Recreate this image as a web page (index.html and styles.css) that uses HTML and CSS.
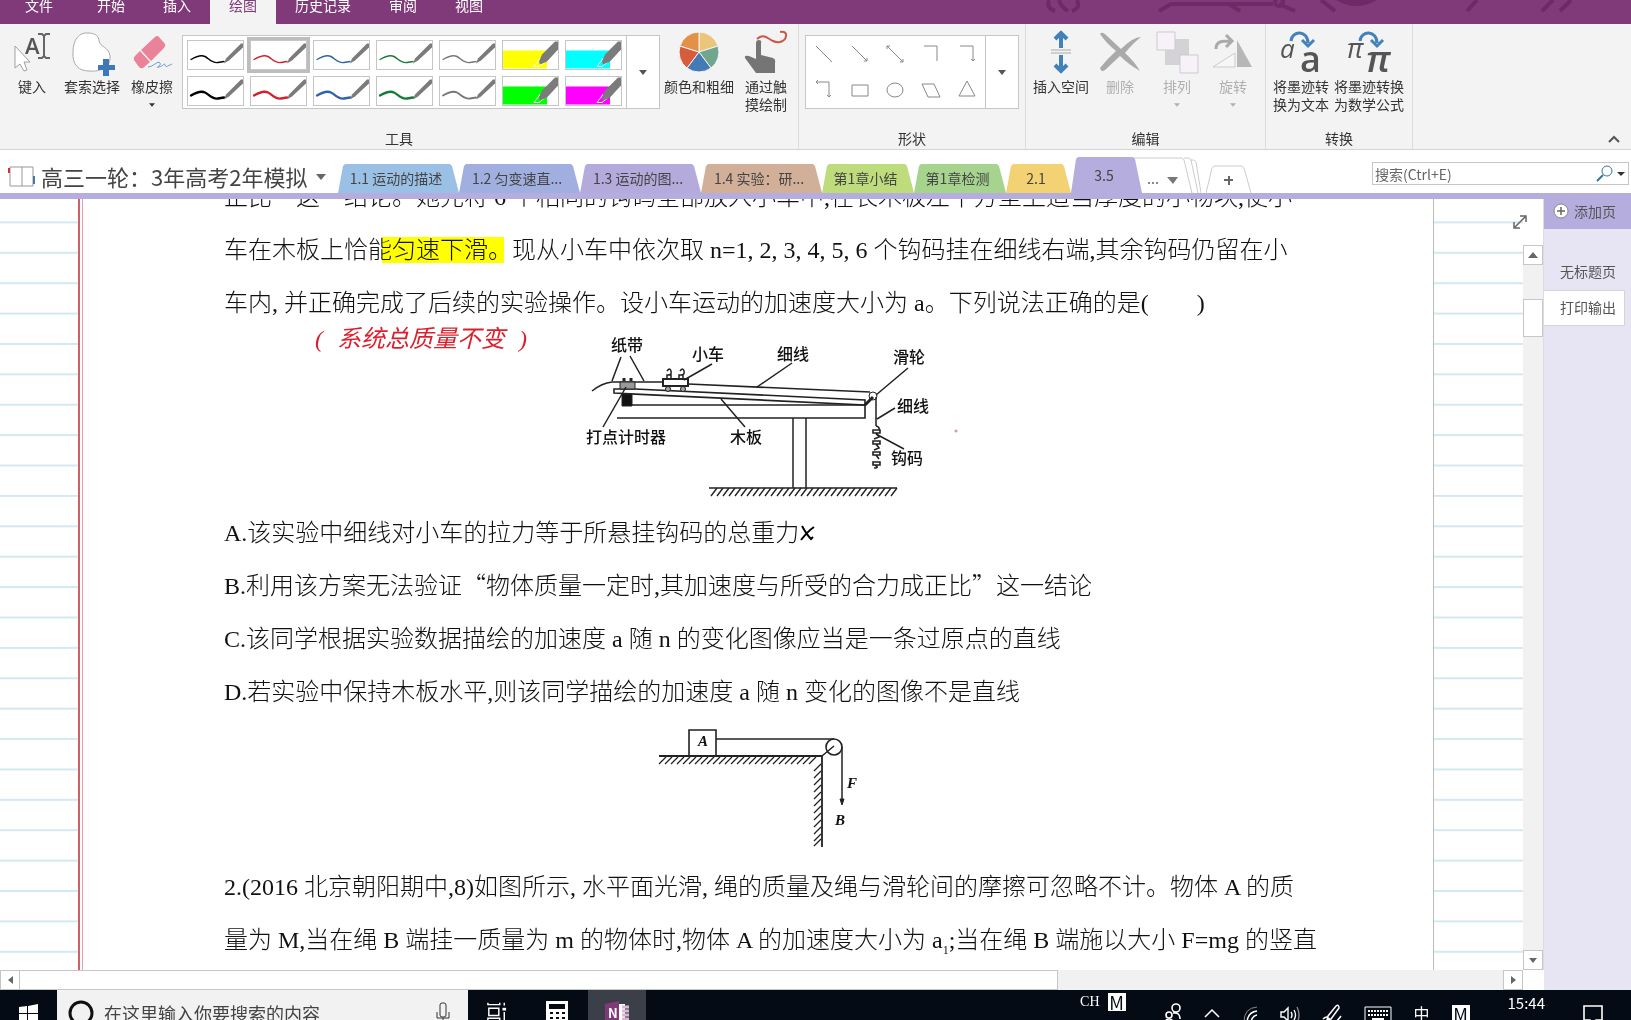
FILE: index.html
```html
<!DOCTYPE html>
<html lang="zh-CN">
  <head>
    <meta charset="UTF-8" />
    <meta name="viewport" content="width=device-width, initial-scale=1.0" />
    <title>高三一轮：3年高考2年模拟</title>
    <link rel="stylesheet" href="styles.css">
  </head>
  <body>
    <svg class="defs" aria-hidden="true">
      <symbol id="pen" viewBox="0 0 55 27">
        <path d="M3 18C8 15 13 13 17 15S24 22 30 21L36 20" fill="none" stroke="currentColor" stroke-linecap="round" />
        <path d="M36 22L38 17L53 2L55 2V6L41 19Z" fill="#7b7b7b" stroke="none" />
      </symbol>
      <symbol id="marker" viewBox="0 0 55 27">
        <path d="M0 9H44V27H0Z" fill="currentColor" />
        <path d="M31 25L37 17L41 21L36 25Z" fill="currentColor" stroke="#fff" />
        <path d="M36 20L39 13L52 0H55V8L44 20L37 23Z" fill="#7b7b7b" />
      </symbol>
      <symbol id="down" viewBox="0 0 10 6"><path d="M0 0H10L5 6Z" fill="currentColor" /></symbol>
    </svg>

    <header class="menu-bar">
      <nav>
        <a class="file" href="#">文件</a>
        <a href="#">开始</a>
        <a href="#">插入</a>
        <a class="active" href="#">绘图</a>
        <a href="#">历史记录</a>
        <a href="#">审阅</a>
        <a href="#">视图</a>
      </nav>
      <svg class="pattern" width="590" height="24" viewBox="0 0 590 24" fill="none" stroke="#6d2a66" stroke-width="4" aria-hidden="true">
        <path d="M8 0Q5 8 14 11M36 0Q40 8 31 11M18 0Q20 7 27 11M118 11L130 4H232M188 4L199 11M238 4L254 11M280 0L294 11M426 11L436 0M501 11L512 0M519 11L530 0" />
        <circle cx="238" cy="2" r="4" />
        <path d="M295 0Q315 12 336 0Z" fill="#6d2a66" stroke="none" />
      </svg>
    </header>

    <section class="ribbon">
      <div class="group tools">
        <div class="group-body">
          <button class="tool w52">
            <svg width="44" height="48" viewBox="0 0 44 48"><path d="M5 17V39L10 35L14 42L17 41L14 33H20Z" fill="#fff" stroke="#a0a0a0" /><text x="15" y="25" font-size="22" font-weight="600" fill="#555">A</text><path d="M28 5H32L34 7L36 5H40M34 7V27M28 29H32L34 27L36 29H40" fill="none" stroke="#666" stroke-width="2" /></svg>
            <span>键入</span>
          </button>
          <button class="tool w60">
            <svg width="46" height="48" viewBox="0 0 46 48"><path d="M19 4C10 3 4 11 4 23C3 36 10 42 20 42C32 43 42 38 41 27C40 18 31 18 30 12C30 7 26 4 19 4Z" fill="#fff" stroke="#aaa" /><path d="M34 30H40V36H46V41H40V47H34V41H29V36H34Z" fill="#3e78b8" /></svg>
            <span>套索选择</span>
          </button>
          <button class="tool w52">
            <svg width="44" height="48" viewBox="0 0 44 48"><path d="M25 8Q27 6 29 8L35 15Q36 17 34 19L21 32L11 21Z" fill="#ea8299" /><path d="M10 22L20 33L13 39Q11 40 9 38L4 31Q3 29 5 27Z" fill="#ea8299" /><path d="M18 38C23 38 28 31 30 34S24 39 29 38S34 33 35 36S37 37 42 35" fill="none" stroke="#6c9bc8" /></svg>
            <span>橡皮擦</span>
            <svg class="caret" width="6" height="4"><use href="#down" /></svg>
          </button>
          <div class="gallery">
            <div class="ink-grid">
              <button class="ink black" aria-label="黑色笔"><svg stroke-width="1.4"><use href="#pen" /></svg></button>
              <button class="ink red selected" aria-label="红色笔"><svg stroke-width="1.4"><use href="#pen" /></svg></button>
              <button class="ink blue" aria-label="蓝色笔"><svg stroke-width="1.4"><use href="#pen" /></svg></button>
              <button class="ink green" aria-label="绿色笔"><svg stroke-width="1.4"><use href="#pen" /></svg></button>
              <button class="ink gray" aria-label="灰色笔"><svg stroke-width="1.4"><use href="#pen" /></svg></button>
              <button class="ink yellow" aria-label="黄色荧光笔"><svg><use href="#marker" /></svg></button>
              <button class="ink cyan" aria-label="青色荧光笔"><svg><use href="#marker" /></svg></button>
              <button class="ink black" aria-label="黑色粗笔"><svg stroke-width="2.3"><use href="#pen" /></svg></button>
              <button class="ink red" aria-label="红色粗笔"><svg stroke-width="2.3"><use href="#pen" /></svg></button>
              <button class="ink blue" aria-label="蓝色粗笔"><svg stroke-width="2.3"><use href="#pen" /></svg></button>
              <button class="ink green" aria-label="绿色粗笔"><svg stroke-width="2.3"><use href="#pen" /></svg></button>
              <button class="ink gray" aria-label="灰色粗笔"><svg stroke-width="1.8"><use href="#pen" /></svg></button>
              <button class="ink lime" aria-label="绿色荧光笔"><svg><use href="#marker" /></svg></button>
              <button class="ink magenta" aria-label="洋红荧光笔"><svg><use href="#marker" /></svg></button>
            </div>
            <button class="more" aria-label="更多"><svg width="8" height="5"><use href="#down" /></svg></button>
          </div>
          <button class="tool w70">
            <svg width="44" height="48" viewBox="0 0 44 48" stroke="#f3f3f3"><path d="M22 23V3A20 20 0 0 1 41 17Z" fill="#eac57a" /><path d="M22 23L41 17A20 20 0 0 1 34 39Z" fill="#70a58e" /><path d="M22 23L34 39A20 20 0 0 1 10 39Z" fill="#447ab5" /><path d="M22 23L10 39A20 20 0 0 1 3 17Z" fill="#d85c3c" /><path d="M22 23L3 17A20 20 0 0 1 22 3Z" fill="#e49148" /></svg>
            <span>颜色和粗细</span>
          </button>
          <button class="tool w56">
            <svg width="44" height="48" viewBox="0 0 44 48"><path d="M12 14Q12 11 15 11T17 14V26L29 29Q32 30 31 34V44H12L1 29Q0 26 5 27L12 30Z" fill="#757575" /><path d="M13 10C19 4 23 9 29 12S43 12 42 5Q41 2 36 3" fill="none" stroke="#cf5745" stroke-width="2" /></svg>
            <span>通过触<br>摸绘制</span>
          </button>
        </div>
        <h2>工具</h2>
      </div>

      <div class="group shapes">
        <div class="group-body">
          <div class="gallery">
            <div class="shape-grid">
              <button aria-label="直线"><svg viewBox="0 0 20 20"><path d="M2 2L18 18" /></svg></button>
              <button aria-label="箭头"><svg viewBox="0 0 20 20"><path d="M2 2L17 17M17 14V17H14" /></svg></button>
              <button aria-label="双箭头"><svg viewBox="0 0 20 20"><path d="M2 2L18 18M18 15V18H15M2 5V2H5" /></svg></button>
              <button aria-label="折线"><svg viewBox="0 0 20 20"><path d="M3 2H16V17" /></svg></button>
              <button aria-label="折线箭头"><svg viewBox="0 0 20 20"><path d="M3 2H16V17M14 15L16 17L18 15" /></svg></button>
              <button aria-label="折线双箭头"><svg viewBox="0 0 20 20"><path d="M2 2H15V17M13 15L15 17L17 15M4 0L2 2L4 4" /></svg></button>
              <button aria-label="矩形"><svg viewBox="0 0 20 20"><path d="M2 5H18V16H2Z" /></svg></button>
              <button aria-label="椭圆"><svg viewBox="0 0 20 20"><ellipse cx="10" cy="10" rx="8" ry="7" /></svg></button>
              <button aria-label="平行四边形"><svg viewBox="0 0 20 20"><path d="M1 4H13L19 17H7Z" /></svg></button>
              <button aria-label="三角形"><svg viewBox="0 0 20 20"><path d="M10 1L18 16H2Z" /></svg></button>
            </div>
            <button class="more" aria-label="更多形状"><svg width="8" height="5"><use href="#down" /></svg></button>
          </div>
        </div>
        <h2>形状</h2>
      </div>

      <div class="group edit">
        <div class="group-body">
          <button class="tool w60">
            <svg width="44" height="48" viewBox="0 0 44 48"><path d="M22 4V19M22 26V42M16 10L22 4L28 10M16 36L22 42L28 36" fill="none" stroke="#4381bb" stroke-width="4" /><path d="M12 21H32M12 24H32" stroke="#aaa" /></svg>
            <span>插入空间</span>
          </button>
          <button class="tool w58" disabled>
            <svg width="44" height="48" viewBox="0 0 44 48" fill="#aaa"><path d="M2 5Q4 2 8 6L23 20Q35 8 43 8Q35 14 27 24Q36 32 42 42Q30 35 22 27L7 41Q3 44 2 39Q9 30 18 22Q9 15 2 5Z" /></svg>
            <span>删除</span>
          </button>
          <button class="tool w56" disabled>
            <svg width="44" height="48" viewBox="0 0 44 48" stroke="#cfc7d1"><path d="M10 10H34V36H10Z" fill="#d5d2d6" stroke="none" /><path d="M2 3H20V21H2ZM25 26H43V44H25Z" fill="#f6f2f7" /></svg>
            <span>排列</span>
            <svg class="caret" width="6" height="4"><use href="#down" /></svg>
          </button>
          <button class="tool w56" disabled>
            <svg width="44" height="48" viewBox="0 0 44 48"><path d="M26 11V38H41Z" fill="#b7b7b7" /><path d="M24 24V38H2Z" fill="#f8f6f8" stroke="#ccc" /><path d="M5 20C5 12 11 12 20 12M15 6L21 12L15 18" fill="none" stroke="#aaa" stroke-width="3" /></svg>
            <span>旋转</span>
            <svg class="caret" width="6" height="4"><use href="#down" /></svg>
          </button>
        </div>
        <h2>编辑</h2>
      </div>

      <div class="group convert">
        <div class="group-body">
          <button class="tool w62">
            <svg width="44" height="48" viewBox="0 0 44 48"><text x="1" y="29" font-size="26" font-style="italic">a</text><text x="21" y="43" font-size="36" font-weight="600">a</text><path d="M12 12C13 1 29 1 29 14M23 11L29 17L35 11" fill="none" stroke="#4381bb" stroke-width="3" /></svg>
            <span>将墨迹转<br>换为文本</span>
          </button>
          <button class="tool w74">
            <svg width="44" height="48" viewBox="0 0 44 48"><text x="0" y="29" font-size="27" font-style="italic">π</text><text x="19" y="43" font-size="37" font-style="italic" font-weight="600">π</text><path d="M13 12C14 1 30 1 30 14M24 11L30 17L36 11" fill="none" stroke="#4381bb" stroke-width="3" /></svg>
            <span>将墨迹转换<br>为数学公式</span>
          </button>
        </div>
        <h2>转换</h2>
      </div>
      <button class="collapse" aria-label="折叠功能区"><svg width="12" height="8" viewBox="0 0 12 8"><path d="M1 7L6 2L11 7" fill="none" stroke="#555" stroke-width="2" /></svg></button>
    </section>

    <section class="notebook-bar">
      <button class="notebook">
        <svg width="28" height="24" viewBox="0 0 28 24" fill="none" stroke="#999"><path d="M2 2H25V21H2ZM14 2V21" fill="#fff" /><path d="M1 3V8" stroke="#c33" stroke-width="2" /><path d="M26 11V19" stroke="#47a" stroke-width="2" /></svg>
        <span>高三一轮：3年高考2年模拟</span>
        <svg width="10" height="6"><use href="#down" /></svg>
      </button>
      <nav class="sections">
        <a class="sky" href="#">1.1 运动的描述</a>
        <a class="indigo" href="#">1.2 匀变速直...</a>
        <a class="violet" href="#">1.3 运动的图...</a>
        <a class="tan" href="#">1.4 实验：研...</a>
        <a class="leaf short" href="#">第1章小结</a>
        <a class="mint short" href="#">第1章检测</a>
        <a class="gold tiny" href="#">2.1</a>
        <a class="current" href="#">3.5</a>
      </nav>
      <button class="overflow" aria-label="更多分区">
        <svg width="68" height="36" viewBox="0 0 68 36"><path d="M0 1H47Q49 1 50 3L58 36M50 1H54Q56 1 57 3L64 36M56 3H59Q61 3 62 5L67 36" fill="none" stroke="#ccc" /><path d="M14 25h2v2h-2zM18 25h2v2h-2zM22 25h2v2h-2z" fill="#888" /><path d="M33 20H44L39 27Z" fill="#777" /></svg>
      </button>
      <button class="new-section" aria-label="新建分区">
        <svg width="46" height="28" viewBox="0 0 46 28"><path d="M0 28L6 3Q7 1 9 1H35Q37 1 38 3L45 28" fill="none" stroke="#ccc" /><path d="M18 15H27M23 11V20" stroke="#666" stroke-width="2" /></svg>
      </button>
      <label class="search">
        <input type="text" placeholder="搜索(Ctrl+E)" aria-label="搜索" />
        <svg width="30" height="18" viewBox="0 0 30 18"><circle cx="11" cy="6" r="5" fill="#fff" stroke="#3d6f9f" /><path d="M7 10L1 16" stroke="#2f73ad" stroke-width="2" /><path d="M21 7H29L25 11Z" fill="#333" /></svg>
      </label>
    </section>

    <main>
      <div class="canvas">
        <div class="viewport">
          <div class="margin"></div>
          <article class="paper">
            <p>正比<span class="zh">”</span>这一结论。她先将 6 个相同的钩码全部放入小车中,在长木板左下方垫上适当厚度的小物块,使小<br>车在木板上恰能<mark>匀速下滑。</mark>现从小车中依次取 n=1, 2, 3, 4, 5, 6 个钩码挂在细线右端,其余钩码仍留在小<br>车内, 并正确完成了后续的实验操作。设小车运动的加速度大小为 a。下列说法正确的是(<span class="zh">　　</span>)</p>
            <div class="handwriting"><span>(</span><span>系统总质量不变</span><span>)</span></div>
            <svg class="figure" width="376" height="177" viewBox="0 10 376 177" fill="none" stroke="#222">
              <path d="M22 71Q32 63 42 62H93M118 64L300 72" stroke-width="1.6" />
              <path d="M44 69V73L295 85V80L65 69ZM60 74L294 85" stroke-width="1.6" fill="#fff" />
              <path d="M61 85H295V98H47" stroke-width="1.6" />
              <path d="M52 74H62V86H52Z" fill="#111" />
              <path d="M50 62H65V69H50Z" fill="#999" />
              <path d="M54 61V58M61 61V58" stroke-width="3" />
              <path d="M93 59H118V66H93Z" fill="#fff" stroke-width="2" />
              <path d="M97 59V55H101V59M109 59V55H113V59M97 51Q100 47 101 51T98 55M110 51Q113 47 114 51T111 55" stroke-width="1.5" />
              <circle cx="98" cy="69" r="2.5" fill="#aaa" /><circle cx="113" cy="69" r="2.5" fill="#aaa" />
              <circle cx="303" cy="76" r="4" />
              <path d="M295 85L303 77" stroke-width="3" />
              <path d="M306 77V106M51 37L42 61M60 36L74 61M142 44L114 60M222 43L187 67M338 48L306 75M33 107L56 67M175 107L151 79M325 88L307 99M334 129L306 114M223 98V168M236 98V168M139 168H327" stroke-width="1.5" />
              <path d="M306 106Q310 107 309 110M303 110H310V113H303ZM306 113L309 117L304 119M303 121H310V124H303ZM306 124L309 128L304 130M303 132H310V135H303ZM306 135L309 139M303 142H310V145H303ZM305 145Q310 148 304 148" stroke-width="1.6" />
              <path stroke-width="1.4" d="M147 168l-6 8m12-8l-6 8m12-8l-6 8m12-8l-6 8m12-8l-6 8m12-8l-6 8m12-8l-6 8m12-8l-6 8m12-8l-6 8m12-8l-6 8m12-8l-6 8m12-8l-6 8m12-8l-6 8m12-8l-6 8m12-8l-6 8m12-8l-6 8m12-8l-6 8m12-8l-6 8m12-8l-6 8m12-8l-6 8m12-8l-6 8m12-8l-6 8m12-8l-6 8m12-8l-6 8m12-8l-6 8m12-8l-6 8m12-8l-6 8m12-8l-6 8m12-8l-6 8m12-8l-6 8m12-8l-6 8" />
              <g class="labels">
                <text x="41" y="31">纸带</text><text x="122" y="40">小车</text><text x="207" y="40">细线</text><text x="323" y="43">滑轮</text>
                <text x="327" y="92">细线</text><text x="321" y="144">钩码</text><text x="160" y="123">木板</text><text x="16" y="123">打点计时器</text>
              </g>
              <circle cx="386" cy="111" r="1" stroke="#c77" />
            </svg>
            <p>A.该实验中细线对小车的拉力等于所悬挂钩码的总重力<svg class="cross" width="18" height="18" viewBox="0 0 18 18"><path d="M3 3Q8 12 12 16L14 14M15 4Q9 8 2 17" fill="none" stroke="#000" stroke-width="2" /></svg><br>B.利用该方案无法验证<span class="zh">“</span>物体质量一定时,其加速度与所受的合力成正比<span class="zh">”</span>这一结论<br>C.该同学根据实验数据描绘的加速度 a 随 n 的变化图像应当是一条过原点的直线<br>D.若实验中保持木板水平,则该同学描绘的加速度 a 随 n 变化的图像不是直线</p>
            <svg class="figure" width="236" height="142" viewBox="0 9 236 142" fill="none" stroke="#222">
              <path d="M19 46H182V137" stroke-width="1.8" />
              <path d="M49 46V20H76V46M76 29H194" stroke-width="1.6" />
              <circle cx="194" cy="37" r="8" stroke-width="1.6" />
              <path d="M182 46L194 36M202 37V92" stroke-width="1.5" />
              <path d="M200 89H204L202 95Z" fill="#222" />
              <path stroke-width="1.3" d="M26 47l-7 7m13-7l-7 7m13-7l-7 7m13-7l-7 7m13-7l-7 7m13-7l-7 7m13-7l-7 7m13-7l-7 7m13-7l-7 7m13-7l-7 7m13-7l-7 7m13-7l-7 7m13-7l-7 7m13-7l-7 7m13-7l-7 7m13-7l-7 7m13-7l-7 7m13-7l-7 7m13-7l-7 7m13-7l-7 7m13-7l-7 7m13-7l-7 7m13-7l-7 7m13-7l-7 7m13-7l-7 7m13-7l-7 7" />
              <path stroke-width="1.3" d="M181 54l-7 7m7 0l-7 7m7 0l-7 7m7 0l-7 7m7 0l-7 7m7 0l-7 7m7 0l-7 7m7 0l-7 7m7 0l-7 7m7 0l-7 7m7 0l-7 7m7-2l-7 7" />
              <g class="letters"><text x="58" y="36">A</text><text x="207" y="78">F</text><text x="195" y="115">B</text></g>
            </svg>
            <p>2.(2016 北京朝阳期中,8)如图所示, 水平面光滑, 绳的质量及绳与滑轮间的摩擦可忽略不计。物体 A 的质<br>量为 M,当在绳 B 端挂一质量为 m 的物体时,物体 A 的加速度大小为 a<sub>1</sub>;当在绳 B 端施以大小 F=mg 的竖直</p>
          </article>
          <div class="right-margin"></div>
          <div class="side-scroll">
            <button class="expand" aria-label="整页视图"><svg width="14" height="14" viewBox="0 0 14 14" fill="none" stroke="#666" stroke-width="1.5"><path d="M2 12L12 2M7 1H13V7M1 7V13H7" /></svg></button>
            <button class="arrow" aria-label="向上"><svg class="up" width="10" height="6"><use href="#down" /></svg></button>
            <div class="track"><div class="thumb"></div></div>
            <button class="arrow" aria-label="向下"><svg width="8" height="5"><use href="#down" /></svg></button>
          </div>
        </div>
        <div class="bottom-scroll">
          <button class="arrow" aria-label="向左"><svg width="5" height="8" viewBox="0 0 5 8"><path d="M5 0V8L0 4Z" fill="#666" /></svg></button>
          <div class="track"><div class="thumb"></div></div>
          <button class="arrow" aria-label="向右"><svg width="5" height="8" viewBox="0 0 5 8"><path d="M0 0V8L5 4Z" fill="#666" /></svg></button>
        </div>
      </div>
      <aside class="pages">
        <button class="add-page"><svg width="16" height="16" viewBox="0 0 16 16"><circle cx="8" cy="8" r="7" fill="#fff" stroke="#888" /><path d="M4 8H12M8 4V12" stroke="#666" stroke-width="1.5" /></svg>添加页</button>
        <a href="#">无标题页</a>
        <a class="open" href="#">打印输出</a>
      </aside>
    </main>

    <footer class="taskbar">
      <button class="start" aria-label="开始"><svg width="20" height="20" viewBox="0 0 20 20" fill="#fff"><path d="M0 3L8 2V9H0ZM9 2L19 0V9H9ZM0 10H8V18L0 17ZM9 10H19V20L9 18Z" /></svg></button>
      <label class="task-search">
        <svg width="26" height="26" viewBox="0 0 26 26"><circle cx="13" cy="13" r="11" fill="none" stroke="#111" stroke-width="3" /></svg>
        <input type="text" placeholder="在这里输入你要搜索的内容" aria-label="任务栏搜索" />
        <svg width="14" height="22" viewBox="0 0 14 22" fill="none" stroke="#333"><rect x="4" y="1" width="6" height="14" rx="2" /><path d="M1 10V16H13V10M7 16V21" /></svg>
      </label>
      <button class="app" aria-label="任务视图"><svg width="20" height="20" viewBox="0 0 22 20" fill="none" stroke="#fff" stroke-width="1.6"><path d="M1 1V3H14V1M2 7H13V15H2ZM1 20V18H14V20M19 1V4M19 11V20" /><path d="M17 8H21" stroke-width="3" /></svg></button>
      <button class="app wide" aria-label="计算器"><svg width="22" height="28" viewBox="0 0 22 28"><path d="M0 0H22V28H0Z" fill="#fff" /><path d="M3 3H19V8H3ZM4 11h3v2h-3zM10 11h3v2h-3zM16 11h3v2h-3zM4 16h3v2h-3zM10 16h3v2h-3zM16 16h3v2h-3z" fill="#050b14" /></svg></button>
      <button class="app running"><svg width="24" height="24" viewBox="0 0 24 24"><path d="M12 3H20V22H12Z" fill="#fff" /><path d="M17 6H24M17 10H24M17 14H24M17 18H24" stroke="#d9b8d6" stroke-width="3" /><path d="M0 3L14 0V24L0 21Z" fill="#803979" /><text x="3" y="17" font-size="13" font-weight="700" fill="#fff">N</text></svg></button>
      <div class="tray">
        <div class="ime"><span class="ch">CH</span><span class="m">M</span></div>
        <svg width="18" height="22" viewBox="0 0 18 22" fill="none" stroke="#fff" stroke-width="1.6"><circle cx="12" cy="5" r="4" /><circle cx="5" cy="12" r="3" /><path d="M1 21Q1 16 5 16T9 20M9 10Q16 9 16 16" /></svg>
        <svg width="16" height="22" viewBox="0 0 16 22" fill="none" stroke="#fff" stroke-width="1.5"><path d="M1 14L8 7L15 14" /></svg>
        <svg width="16" height="22" viewBox="0 0 16 22" fill="none" stroke="#fff"><path d="M2 19Q2 5 15 4" stroke="#888" /><path d="M5 19Q6 9 15 8M9 19Q10 13 15 12" stroke-width="1.5" /></svg>
        <svg width="20" height="22" viewBox="0 0 20 22" fill="none" stroke="#fff" stroke-width="1.4"><path d="M1 9H4L8 5V18L4 14H1ZM11 9Q13 12 11 15M14 7Q17 12 14 17" /><path d="M17 4Q21 12 17 20" stroke="#888" /></svg>
        <svg width="20" height="22" viewBox="0 0 20 22" fill="none" stroke="#fff"><path d="M6 13L14 3Q17 1 17 5L9 16L5 17ZM1 16Q6 11 8 18T19 13" stroke-width="1.5" /></svg>
        <svg width="28" height="22" viewBox="0 0 28 22" fill="none" stroke="#fff"><path d="M1 4H27V20H1Z" /><path d="M4 8H24M4 12H24" stroke-width="2" stroke-dasharray="2 1" /><path d="M8 16H20" stroke-width="2" /></svg>
        <span class="lang">中</span>
        <span class="m low">M</span>
        <time>15:44</time>
        <svg class="notice" width="20" height="22" viewBox="0 0 20 22" fill="none" stroke="#fff" stroke-width="1.6"><path d="M1 3H19V17H13L10 21L7 17H1Z" /></svg>
      </div>
    </footer>
  </body>
</html>
```
FILE: styles.css
```css
* {
  margin: 0;
  padding: 0;
  box-sizing: border-box;
}

body {
  height: 100vh;
  display: flex;
  flex-direction: column;
  overflow: hidden;
  font-family: "Noto Sans CJK SC", sans-serif;
  font-size: 14px;
  color: #333;
  background: #fff;
}

button {
  font: inherit;
  color: inherit;
  background: none;
  border: none;
}

a {
  color: inherit;
  text-decoration: none;
}

svg {
  display: block;
  flex: none;
}

.defs {
  position: absolute;
  width: 0;
  height: 0;
}

/* Menu */
.menu-bar {
  flex: none;
  height: 24px;
  display: flex;
  justify-content: space-between;
  background: #803979;
  color: #fff;
}

.menu-bar nav {
  display: flex;
}

.menu-bar a {
  padding: 0 19px;
  line-height: 10px;
}

.menu-bar .file {
  padding: 0 25px;
}

.menu-bar .active {
  background: #f3f3f3;
  color: #803979;
}

/* Ribbon */
.ribbon {
  flex: none;
  height: 126px;
  display: flex;
  background: #f3f3f3;
  border-bottom: 1px solid #d5d5d5;
}

.group {
  border-right: 1px solid #dcdcdc;
}

.group-body {
  height: 105px;
  display: flex;
  align-items: flex-start;
}

.group h2 {
  font-size: 14px;
  font-weight: 400;
  line-height: 18px;
  text-align: center;
}

.tools .group-body {
  gap: 4px;
  padding: 0 4px 0 6px;
}

.shapes .group-body {
  padding: 0 6px;
}

.edit .group-body {
  padding: 0 4px 0 5px;
}

.convert .group-body {
  padding: 0 6px 0 4px;
}

.tool {
  display: flex;
  flex-direction: column;
  align-items: center;
  padding-top: 5px;
  line-height: 18px;
  white-space: nowrap;
}

.tool text {
  fill: #555;
  font-family: "Open Sans", sans-serif;
}

.tool:disabled {
  color: #b0b0b0;
}

.caret {
  margin-top: 8px;
}

.w52 { width: 52px; }
.w56 { width: 56px; }
.w58 { width: 58px; }
.w60 { width: 60px; }
.w62 { width: 62px; }
.w70 { width: 70px; }
.w74 { width: 74px; }

.gallery {
  height: 74px;
  margin-top: 11px;
  display: flex;
  background: #fff;
  border: 1px solid #c6c6c6;
}

.ink-grid {
  display: grid;
  grid-template-columns: repeat(7, 57px);
  grid-template-rows: 30px 30px;
  gap: 6px;
  padding: 4px;
}

.ink {
  border: 1px solid #c6c6c6;
}

.ink svg {
  width: 55px;
  height: 28px;
}

.ink.selected {
  outline: 3px solid #bdbdbd;
}

.black { color: #000; }
.red { color: #d3202a; }
.blue { color: #2f62ac; }
.green { color: #177a35; }
.gray { color: #777; }
.yellow { color: #ff0; }
.cyan { color: #0ff; }
.lime { color: #0f0; }
.magenta { color: #f0f; }

.more {
  width: 33px;
  display: flex;
  justify-content: center;
  align-items: center;
  border-left: 1px solid #c6c6c6;
  color: #555;
}

.shape-grid {
  width: 179px;
  display: grid;
  grid-template-columns: repeat(5, 1fr);
}

.shape-grid button {
  display: flex;
  justify-content: center;
  align-items: center;
}

.shape-grid svg {
  width: 20px;
  height: 20px;
  fill: none;
  stroke: #888;
}

.collapse {
  margin: auto 11px 6px auto;
}

/* Notebook title and section tabs */
.notebook-bar {
  flex: none;
  height: 49px;
  display: flex;
  align-items: flex-end;
  border-bottom: 6px solid #b5addd;
}

.notebook {
  width: 338px;
  height: 33px;
  padding-left: 8px;
  display: flex;
  align-items: center;
  gap: 5px;
  font-size: 22px;
  line-height: 33px;
  white-space: nowrap;
  color: #444;
}

.notebook svg:last-child {
  margin-left: 4px;
  color: #666;
}

.sections {
  display: flex;
  align-items: flex-end;
}

.sections a {
  width: 121px;
  height: 29px;
  padding-right: 5px;
  line-height: 29px;
  text-align: center;
  white-space: nowrap;
  color: #444;
  clip-path: polygon(0 100%, 5px 2px, 7px 0, calc(100% - 9px) 0, calc(100% - 7px) 2px, 100% 100%);
}

.sections .short {
  width: 92px;
}

.sections .tiny {
  width: 65px;
}

.sections .current {
  width: 71px;
  height: 36px;
  line-height: 36px;
  background: #b5addd;
}

.sky { background: #9bc0e6; }
.indigo { background: #a0afe0; }
.violet { background: #b4aadc; }
.tan { background: #d2af99; }
.leaf { background: #bfdc7c; }
.mint { background: #a6d48e; }
.gold { background: #f2d273; }

.overflow {
  margin-left: -8px;
}

.new-section {
  margin-left: 4px;
}

.search {
  width: 257px;
  height: 23px;
  margin: 0 2px 8px auto;
  padding: 0 2px;
  display: flex;
  align-items: center;
  border: 1px solid #c6c6c6;
}

.search input {
  flex: 1;
  min-width: 0;
  border: none;
  font: inherit;
}

.search input::placeholder {
  color: #666;
}

/* Page */
main {
  flex: 1;
  min-height: 0;
  display: flex;
}

.canvas {
  flex: 1;
  min-width: 0;
  display: flex;
  flex-direction: column;
}

.viewport {
  flex: 1;
  min-height: 0;
  display: flex;
  overflow: hidden;
}

/* ruled paper shows on both sides of the printout */
.margin,
.right-margin {
  background: linear-gradient(to top, #d2e9f1 2px, #fff 2px) 0 -6px / 100% calc((100% - 11px) / 25);
}

.margin {
  flex: none;
  width: 83px;
  border-right: 1px solid #e8a0a8;
  box-shadow: inset -2px 0 #fff, inset -4px 0 #d06068;
}

.right-margin {
  flex: none;
  width: 90px;
  border-left: 1px solid #bbb;
}

.paper {
  flex: 1;
  min-width: 0;
  position: relative;
  margin-top: -28px;
  padding: 0 141px;
  font-family: "Liberation Serif", "Noto Sans CJK SC", serif;
  font-size: 24px;
  font-weight: 300;
  line-height: 53px;
  color: #111;
  white-space: nowrap;
}

.zh {
  font-family: "Noto Sans CJK SC", sans-serif;
  line-height: 24px;
}

/* highlighter stroke, starts a little early and stops before the full stop ends */
.paper mark {
  margin-left: -10px;
  padding-left: 10px;
  background: linear-gradient(to left, transparent 8px, #ff0 8px);
  color: inherit;
  mix-blend-mode: multiply;
}

.paper sub {
  font-size: 12px;
  line-height: 12px;
}

.figure {
  margin: 0 auto;
  overflow: visible;
}

.cross {
  display: inline-block;
}

.labels text {
  fill: #111;
  stroke: none;
  font-family: "Noto Sans CJK SC", sans-serif;
  font-size: 16px;
  font-weight: 500;
}

.letters text {
  fill: #111;
  stroke: none;
  font-family: "Liberation Serif", serif;
  font-size: 15px;
  font-style: italic;
  font-weight: 700;
}

.handwriting {
  position: absolute;
  left: 232px;
  top: 150px;
  display: flex;
  gap: 14px;
  font-style: italic;
  font-weight: 400;
  line-height: 36px;
  color: #dc1f2c;
}

/* Scroll bars */
.side-scroll {
  flex: none;
  width: 21px;
  display: flex;
  flex-direction: column;
  border-right: 1px solid #ddd;
}

.expand {
  height: 46px;
  display: flex;
  align-items: center;
}

.expand svg {
  margin-left: -10px;
}

.arrow {
  flex: none;
  width: 20px;
  height: 20px;
  display: flex;
  justify-content: center;
  align-items: center;
  border: 1px solid #c6c6c6;
  background: #fff;
  color: #666;
}

.up {
  transform: rotate(180deg);
}

.track {
  flex: 1;
  background: #f1f1f1;
}

.side-scroll .thumb {
  height: 38px;
  margin-top: 34px;
  border: 1px solid #c6c6c6;
  background: #fff;
}

.side-scroll .track {
  display: flow-root;
}

.bottom-scroll {
  flex: none;
  height: 20px;
  padding-right: 21px;
  display: flex;
}

.bottom-scroll .thumb {
  width: 70%;
  height: 20px;
  border: 1px solid #c6c6c6;
  border-left: none;
  background: #fff;
}

.pages {
  flex: none;
  width: 87px;
  display: flex;
  flex-direction: column;
  background: #e7e5f4;
  color: #555;
}

.add-page {
  height: 30px;
  margin-bottom: 25px;
  padding: 0 0 6px 9px;
  display: flex;
  align-items: center;
  gap: 5px;
  background: #b5addd;
}

.pages a {
  height: 36px;
  padding-left: 16px;
  line-height: 34px;
  white-space: nowrap;
}

.pages .open {
  width: 81px;
  border: 1px solid #d5d5d5;
  border-left: none;
  background: #fff;
  line-height: 32px;
}

/* Taskbar, its lower part runs off the screen */
.taskbar {
  flex: none;
  height: 30px;
  display: flex;
  align-items: flex-start;
  overflow: hidden;
  background: #050b14;
  color: #fff;
}

.start {
  width: 57px;
  padding: 14px 0 0 19px;
}

.task-search {
  width: 411px;
  height: 46px;
  padding: 0 18px 0 11px;
  display: flex;
  align-items: center;
  background: #f2f2f2;
}

.task-search input {
  flex: 1;
  margin-left: 10px;
  border: none;
  background: none;
  font: inherit;
  font-size: 18px;
}

.task-search input::placeholder {
  color: #444;
}

.app {
  width: 58px;
  height: 46px;
  padding-top: 11px;
  display: flex;
  justify-content: center;
}

.wide {
  width: 62px;
}

.running {
  background: #3b3f47;
}

.tray {
  margin-left: auto;
  padding-right: 28px;
  display: flex;
  align-items: flex-start;
  gap: 22px;
}

.tray svg {
  margin-top: 13px;
}

.ime {
  display: flex;
  gap: 8px;
  margin: 3px 16px 0 0;
}

.ch {
  font-family: "Liberation Serif", serif;
  line-height: 18px;
}

.m {
  width: 18px;
  height: 18px;
  background: #fff;
  color: #050b14;
  font-size: 18px;
  line-height: 18px;
  text-align: center;
}

.low {
  margin-top: 15px;
}

.lang {
  margin-top: 12px;
  font-size: 16px;
  line-height: 22px;
}

.tray time {
  margin: 2px 16px 0;
  font-size: 15px;
  line-height: 22px;
}
```
